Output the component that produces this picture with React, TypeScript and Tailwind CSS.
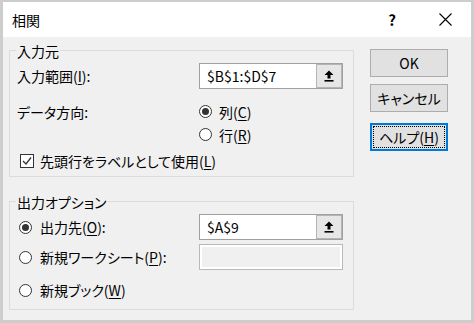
import React from "react";

const Radio = ({ checked }: { checked?: boolean }) => (
  <span className="w-[13px] h-[13px] rounded-full border border-[#333] bg-white flex items-center justify-center shrink-0">
    {checked && <span className="w-[7px] h-[7px] rounded-full bg-[#333]" />}
  </span>
);

const UpIcon = () => (
  <svg width="10" height="12" viewBox="0 0 10 12">
    <path d="M5 0.5 L9.5 5 H6.5 V8.5 H3.5 V5 H0.5 Z" fill="#000" />
    <rect x="0.5" y="10" width="9" height="1.6" fill="#000" />
  </svg>
);

const RefField = ({ value }: { value: string }) => (
  <div className="w-[144px] h-[26px] border border-[#a0a0a0] bg-white flex">
    <div className="flex-1 pl-[7px] flex items-center text-[14px] text-black">{value}</div>
    <div className="w-[26px] h-full border border-[#b4b4b4] bg-[#e6e6e6] flex items-center justify-center">
      <UpIcon />
    </div>
  </div>
);

const Btn = ({ children, focus }: { children: React.ReactNode; focus?: boolean }) =>
  focus ? (
    <div className="w-[78px] h-[28px] border-2 border-[#0078d7] bg-[#e1e1e1] p-[1px]">
      <div className="w-full h-full border border-dotted border-black flex items-center justify-center text-[14px] text-black">
        {children}
      </div>
    </div>
  ) : (
    <div className="w-[78px] h-[28px] border border-[#adadad] bg-[#e1e1e1] flex items-center justify-center text-[14px] text-black">
      {children}
    </div>
  );

export default function App() {
  return (
    <div className="w-[474px] h-[323px] border-x-[3px] border-t-2 border-b-[3px] border-[#cdcdcd] bg-[#f0f0f0] flex flex-col text-black font-['Noto_Sans_CJK_JP',sans-serif] [font-feature-settings:'palt'] leading-none">
      {/* title bar */}
      <div className="h-[35px] bg-white flex items-center shrink-0">
        <span className="pl-[9px] text-[14px]">相関</span>
        <span className="ml-auto mr-[43px] text-[15px] font-bold">?</span>
        <svg width="13" height="13" viewBox="0 0 13 13" className="mr-[19px]">
          <path d="M0.5 0.5 L12.5 12.5 M12.5 0.5 L0.5 12.5" stroke="#000" strokeWidth="1.1" />
        </svg>
      </div>

      <div className="flex-1 flex pl-[6px]">
        {/* left column */}
        <div className="w-[345px] flex flex-col">
          {/* group 1 */}
          <div className="relative mt-[13px] h-[127px] border border-[#dcdcdc] flex flex-col text-[14px]">
            <span className="absolute left-[6px] top-[-10px] h-[20px] px-[1px] bg-[#f0f0f0] flex items-center">入力元</span>
            <div className="mt-[12px] h-[26px] flex items-center">
              <div className="w-[189px] pl-[7px]">
                入力範囲(<u className="underline-offset-2">I</u>):
              </div>
              <RefField value="$B$1:$D$7" />
            </div>
            <div className="mt-[11px] h-[23px] flex items-center">
              <div className="w-[189px] pl-[7px]">データ方向:</div>
              <div className="flex items-center gap-[7px]">
                <Radio checked />
                <span>
                  列(<u className="underline-offset-2">C</u>)
                </span>
              </div>
            </div>
            <div className="h-[23px] flex items-center pl-[189px]">
              <div className="flex items-center gap-[7px]">
                <Radio />
                <span>
                  行(<u className="underline-offset-2">R</u>)
                </span>
              </div>
            </div>
            <div className="mt-[3px] h-[23px] flex items-center pl-[10px] gap-[6px]">
              <span className="w-[14px] h-[14px] border border-[#333] bg-white flex items-center justify-center">
                <svg width="10" height="10" viewBox="0 0 10 10">
                  <path d="M1 5 L4 8 L9 1.5" stroke="#333" strokeWidth="1.3" fill="none" />
                </svg>
              </span>
              <span>
                先頭行をラベルとして使用(<u className="underline-offset-2">L</u>)
              </span>
            </div>
          </div>

          {/* group 2 */}
          <div className="relative mt-[24px] h-[109px] border border-[#dcdcdc] flex flex-col text-[14px]">
            <span className="absolute left-[6px] top-[-10px] h-[20px] px-[1px] bg-[#f0f0f0] flex items-center">出力オプション</span>
            <div className="mt-[12px] h-[26px] flex items-center">
              <div className="w-[189px] pl-[9px] flex items-center gap-[8px]">
                <Radio checked />
                <span>
                  出力先(<u className="underline-offset-2">O</u>):
                </span>
              </div>
              <RefField value="$A$9" />
            </div>
            <div className="mt-[4px] h-[26px] flex items-center">
              <div className="w-[189px] pl-[9px] flex items-center gap-[8px]">
                <Radio />
                <span>
                  新規ワークシート(<u className="underline-offset-2">P</u>):
                </span>
              </div>
              <div className="w-[144px] h-[26px] border border-[#b9b9b9] p-[2px] bg-white">
                <div className="w-full h-full bg-[#f0f0f0]" />
              </div>
            </div>
            <div className="mt-[9px] h-[22px] flex items-center pl-[9px] gap-[8px]">
              <Radio />
              <span>
                新規ブック(<u className="underline-offset-2">W</u>)
              </span>
            </div>
          </div>
        </div>

        {/* right column */}
        <div className="ml-[16px] mt-[12px] flex flex-col">
          <Btn>OK</Btn>
          <div className="mt-[7px]">
            <Btn>キャンセル</Btn>
          </div>
          <div className="mt-[11px]">
            <Btn focus>
              <span>
                ヘルプ(<u className="underline-offset-2">H</u>)
              </span>
            </Btn>
          </div>
        </div>
      </div>
    </div>
  );
}
